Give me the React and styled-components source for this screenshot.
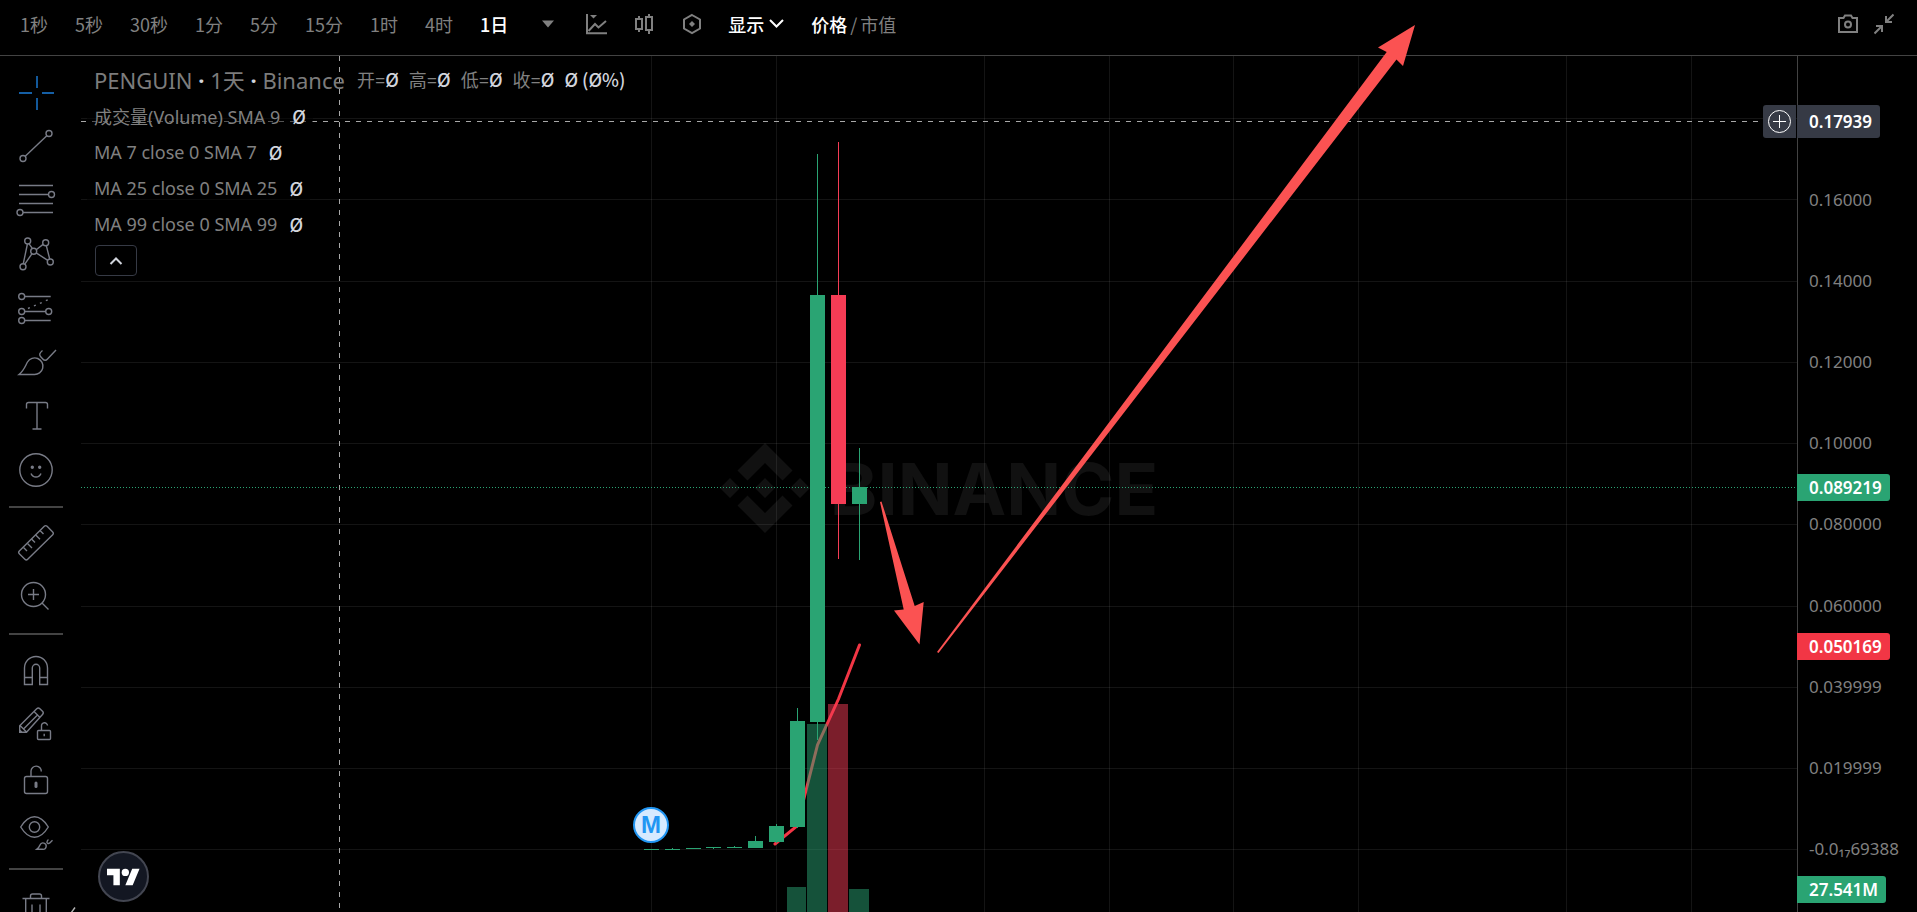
import React, { useState } from "react";
import styled, { createGlobalStyle } from "styled-components";

const GREEN = "#2aa473";
const RED = "#f63c55";

// Size of the plot's own coordinate system
const PLOT_W = 1716;
const PLOT_H = 856;

const GlobalStyle = createGlobalStyle`
  * {
    box-sizing: border-box;
  }
  body {
    margin: 0;
    background: #000;
    font-family: "Noto Sans", "Noto Sans CJK SC", sans-serif;
  }
  button {
    margin: 0;
    padding: 0;
    border: none;
    background: none;
    color: inherit;
    font: inherit;
    cursor: pointer;
  }
`;

const intervals = [
  "1秒",
  "5秒",
  "30秒",
  "1分",
  "5分",
  "15分",
  "1时",
  "4时",
  "1日",
];

const gridRows = [62, 143, 225, 306, 387, 468, 550, 631, 712, 793];
const gridCols = [570, 695, 903, 1028, 1152, 1277, 1485, 1610];

// x is the left edge of the body
const candles = [
  { x: 563, top: 793, bottom: 794, high: 793, low: 794 },
  { x: 584, top: 793, bottom: 794, high: 792, low: 794 },
  { x: 605, top: 792, bottom: 793, high: 792, low: 793 },
  { x: 625, top: 791, bottom: 792, high: 791, low: 793 },
  { x: 646, top: 791, bottom: 792, high: 790, low: 792 },
  { x: 667, top: 785, bottom: 792, high: 780, low: 792 },
  { x: 688, top: 770, bottom: 786, high: 768, low: 787 },
  { x: 709, top: 665, bottom: 771, high: 652, low: 772 },
  { x: 729, top: 239, bottom: 666, high: 98, low: 684 },
  { x: 750, top: 239, bottom: 448, high: 86, low: 503, down: true },
  { x: 771, top: 431, bottom: 448, high: 392, low: 504 },
];

const volumes = [
  { x: 706, w: 19, top: 831 },
  { x: 726, w: 20, top: 668 },
  { x: 747, w: 20, top: 648, down: true },
  { x: 768, w: 20, top: 833 },
];

const axisPrices = [
  "0.16000",
  "0.14000",
  "0.12000",
  "0.10000",
  "0.080000",
  "0.060000",
  "0.039999",
  "0.019999",
  "-0.0₁₇69388",
];

const studies = [
  "成交量(Volume) SMA 9",
  "MA 7 close 0 SMA 7",
  "MA 25 close 0 SMA 25",
  "MA 99 close 0 SMA 99",
];

const drawTools = [
  [
    {
      name: "十字线",
      active: true,
      icon: <path d="M28 11v12M28 33v12M10 28h13M33 28h12" />,
    },
    {
      name: "趋势线",
      icon: (
        <>
          <circle cx="40" cy="14.5" r="3" />
          <circle cx="14" cy="39.5" r="3" />
          <path d="M16.2 37.3 37.8 16.7" />
        </>
      ),
    },
    {
      name: "斐波那契",
      icon: (
        <>
          <path d="M10 12.5h34M10 21.5h29.5M10 30.5h34M14 39.5h30" />
          <circle cx="42.5" cy="21.5" r="3" />
          <circle cx="11" cy="39.5" r="3" />
        </>
      ),
    },
    {
      name: "形态",
      icon: (
        <>
          <circle cx="18.7" cy="14" r="3" />
          <circle cx="36.7" cy="15.7" r="3" />
          <circle cx="24.7" cy="24.3" r="3" />
          <circle cx="41.3" cy="35" r="3" />
          <circle cx="14" cy="39.7" r="3" />
          <path d="M18.4 17 14.3 36.7M19.9 16.7l3.6 5M22.9 26.8l-7.1 10.4M27.2 22.7l6.9-5.3M27.2 25.9l11.6 7.5M37.3 18.7l3.4 13.3" />
        </>
      ),
    },
    {
      name: "预测",
      icon: (
        <>
          <circle cx="12.7" cy="15.5" r="3" />
          <circle cx="12.7" cy="30.5" r="3" />
          <circle cx="39.7" cy="30.5" r="3" />
          <circle cx="12.7" cy="39.5" r="3" />
          <path d="M15.7 15.5h26M15.7 30.5h21M15.7 39.5h26" />
          <path d="M19 27.5 42 17.5" strokeDasharray="2 4.5" />
        </>
      ),
    },
    {
      name: "笔刷",
      icon: (
        <>
          <path d="M10 39.5c5-4 6.500-9 8.500-12.500a8.300 8.300 0 1 1 6.500 12.500z" />
          <path d="M47 15l-8.500 9c-1.500 1.700-3.200 1.700-4.700 0L31.500 21.500c-1.500-1.700-1-3.500 2-6" />
        </>
      ),
    },
    {
      name: "文本",
      icon: <path d="M17.500 19.500v-4q0-2 2-2h17q2 0 2 2v4M28 13.500V40M23.500 40h9" />,
    },
    {
      name: "表情",
      icon: (
        <>
          <circle cx="27" cy="27" r="16.2" />
          <path d="M22 30.500q1.500 3.500 5 3.500t5-3.500" />
          <circle cx="23.300" cy="24.300" r="1" fill="currentColor" />
          <circle cx="30.700" cy="24.300" r="1" fill="currentColor" />
        </>
      ),
    },
  ],
  [
    {
      name: "测量",
      icon: (
        <>
          <path d="M35.300 10.300q1.400-1.400 2.800 0l5.600 5.600q1.400 1.400 0 2.800L18.700 43.300q-1.400 1.400-2.800 0L10.300 37.700q-1.400-1.400 0-2.800z" />
          <path d="M14.500 31.500l3.500 3.500M18.500 27.500l4.500 4.500M22.500 23l3.500 3.500M26.500 18.800l4.500 4.500M31 14.500l3.500 3.500" />
        </>
      ),
    },
    {
      name: "放大",
      icon: (
        <>
          <circle cx="24.500" cy="24.500" r="12" />
          <path d="M24.500 19v11M19 24.500h11M33 33l6.500 6.500" />
        </>
      ),
    },
  ],
  [
    {
      name: "磁铁",
      icon: (
        <path d="M15.500 41.500V25a11.500 11.500 0 0 1 23 0v16.500h-7.800V25a3.700 3.700 0 0 0-7.400 0v16.500zM15.500 34.500h7.800M30.700 34.500h7.800" />
      ),
    },
    {
      name: "保持绘图模式",
      icon: (
        <>
          <path d="M10.700 35.300v-6.600L27.700 11.700q1.600-1.600 3.200 0l2.600 2.600q1.600 1.600 0 3.200L17.500 35.300zM11 28.500l6.500 6.500M25 14.500l6 6M15 31.500l14-14M10.700 33l2.300 2.300" />
          <rect x="28.500" y="33.500" width="13" height="9" rx="1" />
          <path d="M32.500 33.500v-4.500a3 3 0 0 1 6-.5M35.200 36.800v2.500" />
        </>
      ),
    },
    {
      name: "锁定",
      icon: (
        <>
          <rect x="15.500" y="25.500" width="23" height="17" rx="2" />
          <path d="M22 25.500v-5.500a5 5 0 0 1 10.300.5" />
          <path d="M27 32v3.500" strokeWidth="3" strokeLinecap="round" />
        </>
      ),
    },
    {
      name: "隐藏",
      icon: (
        <>
          <path d="M11.700 22Q18 11.800 25.500 11.800T39.300 22Q33 32.300 25.500 32.300T11.700 22z" />
          <circle cx="25.500" cy="22" r="5.200" />
          <path d="M27.700 44.300q2.500-2 3.300-4.300a3.200 3.200 0 1 1 2.500 4.300zM43.500 35.200l-3 3c-1.500 1-3-.5-2.500-1.500q.5-1.500 1.500-2" />
        </>
      ),
    },
  ],
  [
    {
      name: "删除",
      icon: (
        <>
          <path d="M13.500 20.500h27M21.500 20.500v-2.500q0-2 2-2h7q2 0 2 2v2.500M16.700 20.500v22q0 2 2 2h16.600q2 0 2-2v-22M23 26.500v12M31 26.500v12" />
          <path d="M62 35l4-5.500" stroke="#b5b5b5" />
        </>
      ),
    },
  ],
];

const Toolbar = () => {
  const [current, setCurrent] = useState("1日");

  return (
    <TopBar>
      {intervals.map((label) => (
        <IntervalButton
          key={label}
          $active={label === current}
          onClick={() => setCurrent(label)}
        >
          {label}
        </IntervalButton>
      ))}
      <IconButton aria-label="更多周期">
        <svg width="24" height="20" viewBox="0 0 24 20">
          <path d="M7 6.500h12l-6 7z" fill="currentColor" />
        </svg>
      </IconButton>
      <IconButton aria-label="指标">
        <LineIcon width="22" height="22" viewBox="0 0 22 22">
          <path d="M1 1v19.200h20M2.500 18l6.500-7 3.500 3.500 7.500-6.500" />
          <path d="M4 2h7L7.500 5.500z" fill="currentColor" stroke="none" />
        </LineIcon>
      </IconButton>
      <IconButton aria-label="K线样式">
        <LineIcon width="21" height="22" viewBox="0 0 21 22">
          <path d="M1 6h6v10H1zM4 3v3M4 16v3M11 4h6v13h-6zM14 1v3M14 17v4" />
        </LineIcon>
      </IconButton>
      <IconButton aria-label="设置">
        <LineIcon width="18" height="22" viewBox="0 0 18 22">
          <path d="M9 2l8 4.500v9L9 20l-8-4.500v-9z" />
          <path d="M9 8l3 3-3 3-3-3z" fill="currentColor" stroke="none" />
        </LineIcon>
      </IconButton>
      <DisplayButton>
        显示
        <LineIcon width="15" height="10" viewBox="0 0 15 10">
          <path d="M1 1l6.500 6.500L14 1" />
        </LineIcon>
      </DisplayButton>
      <ModeSwitch>
        <IntervalButton $active>价格</IntervalButton>
        <span>/</span>
        <IntervalButton>市值</IntervalButton>
      </ModeSwitch>
      <RightActions>
        <IconButton aria-label="截图">
          <LineIcon width="20" height="22" viewBox="0 0 20 22">
            <path d="M1 5h4.500L7 2.500h6L14.500 5H19v14H1z" />
            <circle cx="10" cy="11.500" r="3" />
          </LineIcon>
        </IconButton>
        <IconButton aria-label="退出全屏">
          <LineIcon width="20" height="22" viewBox="0 0 20 22">
            <path d="M19.500 1.500L12 9M12 3v6h6M.5 20.500L8 13M2 13h6v6" />
          </LineIcon>
        </IconButton>
      </RightActions>
    </TopBar>
  );
};

const Sidebar = () => (
  <SideBar>
    {drawTools.map((group, i) => (
      <ToolGroup key={i}>
        {group.map((tool) => (
          <ToolButton
            key={tool.name}
            aria-label={tool.name}
            $active={tool.active}
          >
            <ToolIcon width="54" height="54" viewBox="0 0 54 54">
              {tool.icon}
            </ToolIcon>
          </ToolButton>
        ))}
      </ToolGroup>
    ))}
  </SideBar>
);

const Watermark = () => (
  <WatermarkBox>
    <svg width="90" height="90" viewBox="0 0 90 90" fill="currentColor">
      <path d="M45 0 72.500 27.500 62.500 37.500 45 20 27.500 37.500 17.500 27.500z" />
      <path d="M45 90 72.500 62.500 62.500 52.500 45 70 27.500 52.500 17.500 62.500z" />
      <path d="M45 35l10 10-10 10-10-10zM10 35l10 10-10 10L0 45zM80 35l10 10-10 10-10-10z" />
    </svg>
    BINANCE
  </WatermarkBox>
);

const Plot = () => (
  <PlotSvg viewBox={`0 0 ${PLOT_W} ${PLOT_H}`} preserveAspectRatio="none">
    <g fill="#fff" fillOpacity="0.08">
      {gridRows.map((y) => (
        <rect key={y} x="0" y={y} width={PLOT_W} height="1" />
      ))}
      {gridCols.map((x) => (
        <rect key={x} x={x} y="0" width="1" height={PLOT_H} />
      ))}
    </g>

    {/* last price and crosshair */}
    <path
      d={`M0 431.500H${PLOT_W}`}
      stroke={GREEN}
      strokeDasharray="1 2"
    />
    <path
      d={`M0 65.500H1682M258.500 0V${PLOT_H}`}
      stroke="#a8a8a8"
      strokeDasharray="5 6"
    />

    <polyline
      points="694,788 716,770 736.500,689 757.500,643 778.500,589"
      fill="none"
      stroke="#f23645"
      strokeWidth="3"
      strokeLinecap="round"
    />

    {candles.map((c) => (
      <g key={c.x} fill={c.down ? RED : GREEN}>
        <rect x={c.x + 7} y={c.high} width="1" height={c.low - c.high} />
        <rect x={c.x} y={c.top} width="15" height={c.bottom - c.top} />
      </g>
    ))}

    {volumes.map((v) => (
      <rect
        key={v.x}
        x={v.x}
        y={v.top}
        width={v.w}
        height={PLOT_H - v.top}
        fill={v.down ? RED : GREEN}
        fillOpacity="0.5"
      />
    ))}
  </PlotSvg>
);

const Legend = () => {
  const [open, setOpen] = useState(true);

  return (
    <LegendBox>
      <LegendTitle>
        <Symbol>
          PENGUIN <b>·</b> 1天 <b>·</b> Binance
        </Symbol>
        <Ohlc>
          {["开", "高", "低", "收"].map((label) => (
            <span key={label}>
              {label}=<Value>Ø</Value>
            </span>
          ))}
          <Value>Ø (Ø%)</Value>
        </Ohlc>
      </LegendTitle>
      {open &&
        studies.map((name) => (
          <StudyRow key={name}>
            {name}
            <Value>Ø</Value>
          </StudyRow>
        ))}
      <CollapseButton aria-label="折叠" onClick={() => setOpen(!open)}>
        <LineIcon width="14" height="10" viewBox="0 0 14 10">
          <path d="M1.500 8L7 2.500 12.500 8" />
        </LineIcon>
      </CollapseButton>
    </LegendBox>
  );
};

const PriceAxis = () => (
  <AxisBox>
    <AxisList>
      {axisPrices.map((price) => (
        <li key={price}>{price}</li>
      ))}
    </AxisList>
    <AddButton aria-label="添加">
      <svg width="23" height="23" viewBox="0 0 23 23" fill="none" stroke="#fff">
        <circle cx="11.500" cy="11.500" r="11" />
        <path d="M11.500 5v13M5 11.500h13" />
      </svg>
    </AddButton>
    <PriceTag $y={49} $color="#363a45" $tall>
      0.17939
    </PriceTag>
    <PriceTag $y={418} $color={GREEN}>
      0.089219
    </PriceTag>
    <PriceTag $y={577} $color="#f23645">
      0.050169
    </PriceTag>
    <PriceTag $y={820} $color={GREEN}>
      27.541M
    </PriceTag>
  </AxisBox>
);

const App = () => (
  <Page>
    <GlobalStyle />
    <Toolbar />
    <Main>
      <Sidebar />
      <ChartPane>
        <Watermark />
        <Plot />
        <Legend />
        <EventMarker>M</EventMarker>
        <TvBadge>
          <svg width="33" height="18" viewBox="0 4 36 18" fill="#fff">
            <path d="M14 22H7V11H0V4h14v18zM28 22h-8l7.500-18h8L28 22z" />
            <circle cx="20" cy="8" r="4" />
          </svg>
        </TvBadge>
      </ChartPane>
      <PriceAxis />
    </Main>
    {/* hand-drawn arrows run over the toolbar as well */}
    <Annotations viewBox="0 0 1917 912" preserveAspectRatio="none">
      <path d="M880 502l1.500-.5 33.200 104.500 9-4-4.200 42.500-25.500-34 9.700-1z" />
      <path d="M937 652L1386.700 52l-8.700-4.500 37-22.500-12 41-6.500-6.500L938.500 653z" />
    </Annotations>
  </Page>
);

// Styled components

const Page = styled.div`
  position: relative;
  display: flex;
  flex-direction: column;
  height: 100vh;
  overflow: hidden;
  background: #000;
  color: #808080;
`;

const TopBar = styled.header`
  display: flex;
  align-items: center;
  gap: 27px;
  flex: 0 0 56px;
  padding: 0 23px 7px 20px;
  border-bottom: 1px solid #434343;
  font-family: "Noto Sans CJK SC", sans-serif;
  font-size: 18px;
  line-height: 24px;
  color: #808080;
`;

const IntervalButton = styled.button`
  color: ${(p) => (p.$active ? "#fff" : "#808080")};
  font-weight: ${(p) => (p.$active ? 500 : 400)};
  white-space: nowrap;
`;

const IconButton = styled.button`
  display: flex;
  align-items: center;
`;

const LineIcon = styled.svg`
  fill: none;
  stroke: currentColor;
  stroke-width: 2;
`;

const DisplayButton = styled.button`
  display: flex;
  align-items: center;
  gap: 5px;
  color: #fff;
  font-weight: 500;
`;

const ModeSwitch = styled.div`
  display: flex;
  gap: 3px;
`;

const RightActions = styled.div`
  display: flex;
  gap: 16px;
  margin-left: auto;
`;

const Main = styled.main`
  display: flex;
  flex: 1;
  min-height: 0;
`;

const SideBar = styled.nav`
  flex: 0 0 81px;
  padding: 1px 18px 0 9px;
`;

const ToolGroup = styled.div`
  padding: 8px 0 9px;

  & + & {
    border-top: 2px solid #434343;
  }
`;

const ToolButton = styled.button`
  display: block;
  color: ${(p) => (p.$active ? "#1c7fdc" : "#787b86")};
`;

const ToolIcon = styled.svg`
  display: block;
  overflow: visible;
  fill: none;
  stroke: currentColor;
  stroke-width: 1.4;
`;

const ChartPane = styled.section`
  position: relative;
  flex: 1;
  min-width: 0;
`;

const PlotSvg = styled.svg`
  position: absolute;
  inset: 0;
  width: 100%;
  height: 100%;
`;

const WatermarkBox = styled.div`
  position: absolute;
  inset: 8px 0 0;
  display: flex;
  align-items: center;
  justify-content: center;
  gap: 20px;
  color: #111;
  font-family: Inter, sans-serif;
  font-size: 72px;
  font-weight: 700;
`;

const LegendBox = styled.div`
  position: relative;
  display: flex;
  flex-direction: column;
  align-items: flex-start;
  padding: 5px 6px;
`;

const LegendTitle = styled.div`
  display: flex;
  align-items: center;
  gap: 12px;
  height: 36px;
  margin-bottom: 4px;
  padding: 0 7px;
  white-space: nowrap;
`;

const Symbol = styled.h1`
  margin: 0;
  font-size: 22px;
  font-weight: 400;
  color: #7c7c7c;

  b {
    color: #d1d4dc;
  }
`;

const Ohlc = styled.div`
  display: flex;
  gap: 10px;
  font-size: 18px;
`;

const Value = styled.span`
  color: #d1d4dc;
  font-family: "Noto Sans CJK SC", sans-serif;
  font-size: 18px;
  font-weight: 500;
`;

const StudyRow = styled.div`
  display: flex;
  align-items: center;
  gap: 12px;
  height: 30px;
  margin-bottom: 6px;
  padding: 0 7px;
  background: rgba(0, 0, 0, 0.5);
  font-size: 18px;
  white-space: nowrap;
`;

const CollapseButton = styled.button`
  && {
    display: flex;
    align-items: center;
    justify-content: center;
    width: 42px;
    height: 31px;
    margin: 0 8px;
    border: 1px solid #363a45;
    border-radius: 4px;
    color: #d1d4dc;
  }
`;

const EventMarker = styled.button`
  && {
    position: absolute;
    left: ${(552 / PLOT_W) * 100}%;
    top: ${(751 / PLOT_H) * 100}%;
    width: 36px;
    height: 36px;
    border: 2px solid #2196f3;
    border-radius: 50%;
    background: #d6eaff;
    color: #2196f3;
    font: 700 24px/32px "Liberation Sans", sans-serif;
  }
`;

const TvBadge = styled.a.attrs({ href: "#", "aria-label": "TradingView" })`
  position: absolute;
  left: 17px;
  bottom: 10px;
  display: flex;
  align-items: center;
  justify-content: center;
  width: 51px;
  height: 51px;
  border: 2px solid #434651;
  border-radius: 50%;
  background: #131722;
`;

const AxisBox = styled.aside`
  position: relative;
  flex: 0 0 120px;
  border-left: 1px solid #434343;
`;

const AxisList = styled.ul`
  display: grid;
  grid-auto-rows: 1fr;
  align-items: center;
  height: 100%;
  margin: 0;
  padding: 103px 0 22px 11px;
  list-style: none;
  font-size: 17px;
  line-height: 24px;
`;

const PriceTag = styled.div`
  position: absolute;
  left: -1px;
  top: ${(p) => (p.$y / PLOT_H) * 100}%;
  padding: 0 8px 0 12px;
  border-radius: 0 3px 3px 0;
  background: ${(p) => p.$color};
  color: #fff;
  font-size: 17px;
  font-weight: 600;
  line-height: ${(p) => (p.$tall ? 33 : 27)}px;
`;

const AddButton = styled.button`
  && {
    position: absolute;
    right: 100%;
    top: ${(49 / PLOT_H) * 100}%;
    display: flex;
    align-items: center;
    justify-content: center;
    width: 33px;
    height: 33px;
    margin-right: 2px;
    border-radius: 3px 0 0 3px;
    background: #363a45;
  }
`;

const Annotations = styled.svg`
  position: absolute;
  inset: 0;
  width: 100%;
  height: 100%;
  fill: #fb5252;
  pointer-events: none;
`;

export default App;
